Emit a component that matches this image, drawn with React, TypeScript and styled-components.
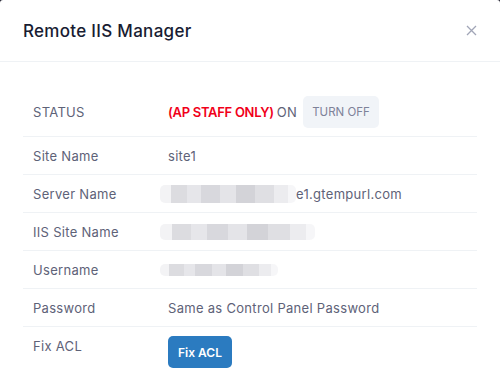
import React from 'react';
import styled, { createGlobalStyle } from 'styled-components';

const GlobalStyle = createGlobalStyle`
  html, body {
    margin: 0;
    padding: 0;
    background: #1e1e2d;
  }
  body {
    font-family: Inter, 'Open Sans', sans-serif;
  }
`;

const Modal = styled.div`
  width: 500px;
  height: 373px;
  background: #ffffff;
  border-radius: 3px 3px 0 0;
  overflow: hidden;
`;

const Header = styled.div`
  display: flex;
  align-items: center;
  justify-content: space-between;
  height: 61px;
  padding: 0 23px;
  border-bottom: 1px solid #eff2f5;
`;

const Title = styled.h2`
  margin: 0;
  font-size: 17px;
  font-weight: 500;
  letter-spacing: 0.3px;
  color: #181c32;
`;

const CloseButton = styled.button`
  display: flex;
  align-items: center;
  justify-content: center;
  width: 12px;
  height: 12px;
  padding: 0;
  border: 0;
  background: transparent;
  color: #a1a5b7;
  cursor: pointer;
`;

const Body = styled.div`
  padding: 25px 23px 0;
`;

const Table = styled.div`
  display: flex;
  flex-direction: column;
`;

const Row = styled.div<{ $align?: string }>`
  display: grid;
  grid-template-columns: 145px 1fr;
  align-items: ${(p) => p.$align || 'center'};
  padding: 9px 0 8px;
  border-bottom: 1px solid #eff2f5;
  font-size: 13px;
  line-height: 20px;
  letter-spacing: 0.3px;
  color: #5e6278;
  &:last-child {
    border-bottom: 0;
  }
`;

const Label = styled.div`
  padding-left: 10px;
`;

const Value = styled.div`
  display: flex;
  align-items: center;
`;

const Alert = styled.span`
  color: #f1001a;
  font-weight: 600;
  letter-spacing: -0.3px;
  margin-right: 3px;
`;

const GhostButton = styled.button`
  margin-left: 6px;
  height: 32px;
  padding: 0 9px;
  border: 0;
  border-radius: 5px;
  background: #f1f4f8;
  color: #7e8299;
  font-family: inherit;
  font-size: 11.5px;
  cursor: pointer;
`;

const PrimaryButton = styled.button`
  height: 32px;
  padding: 0 10px;
  border: 0;
  border-radius: 5px;
  background: #2b7bc0;
  color: #ffffff;
  font-family: inherit;
  font-size: 12px;
  font-weight: 600;
  cursor: pointer;
`;

const Redacted = styled.span<{ $w: number; $h: number }>`
  display: inline-block;
  width: ${(p) => p.$w}px;
  height: ${(p) => p.$h}px;
  margin-left: -8px;
  border-radius: 5px;
  background: linear-gradient(
    90deg,
    #f3f3f5 0% 8%,
    #dcdce0 8% 20%,
    #e6e6ea 20% 30%,
    #d8d8dd 30% 44%,
    #e4e4e8 44% 56%,
    #d3d3d8 56% 70%,
    #dfdfe3 70% 84%,
    #ececef 84% 94%,
    #f6f6f8 94% 100%
  );
  filter: blur(0.6px);
`;

const CloseIcon = () => (
  <svg width="11" height="11" viewBox="0 0 11 11">
    <path d="M1 1 L10 10 M10 1 L1 10" stroke="currentColor" strokeWidth="1.3" />
  </svg>
);

export default function App() {
  return (
    <>
      <GlobalStyle />
      <Modal>
        <Header>
          <Title>Remote IIS Manager</Title>
          <CloseButton aria-label="Close">
            <CloseIcon />
          </CloseButton>
        </Header>
        <Body>
          <Table>
            <Row>
              <Label>STATUS</Label>
              <Value>
                <Alert>(AP STAFF ONLY)</Alert>ON
                <GhostButton>TURN OFF</GhostButton>
              </Value>
            </Row>
            <Row>
              <Label>Site Name</Label>
              <Value>site1</Value>
            </Row>
            <Row>
              <Label>Server Name</Label>
              <Value>
                <Redacted $w={136} $h={18} />
                e1.gtempurl.com
              </Value>
            </Row>
            <Row>
              <Label>IIS Site Name</Label>
              <Value>
                <Redacted $w={155} $h={16} />
              </Value>
            </Row>
            <Row>
              <Label>Username</Label>
              <Value>
                <Redacted $w={118} $h={12} />
              </Value>
            </Row>
            <Row>
              <Label>Password</Label>
              <Value>Same as Control Panel Password</Value>
            </Row>
            <Row $align="start">
              <Label>Fix ACL</Label>
              <Value>
                <PrimaryButton>Fix ACL</PrimaryButton>
              </Value>
            </Row>
          </Table>
        </Body>
      </Modal>
    </>
  );
}
